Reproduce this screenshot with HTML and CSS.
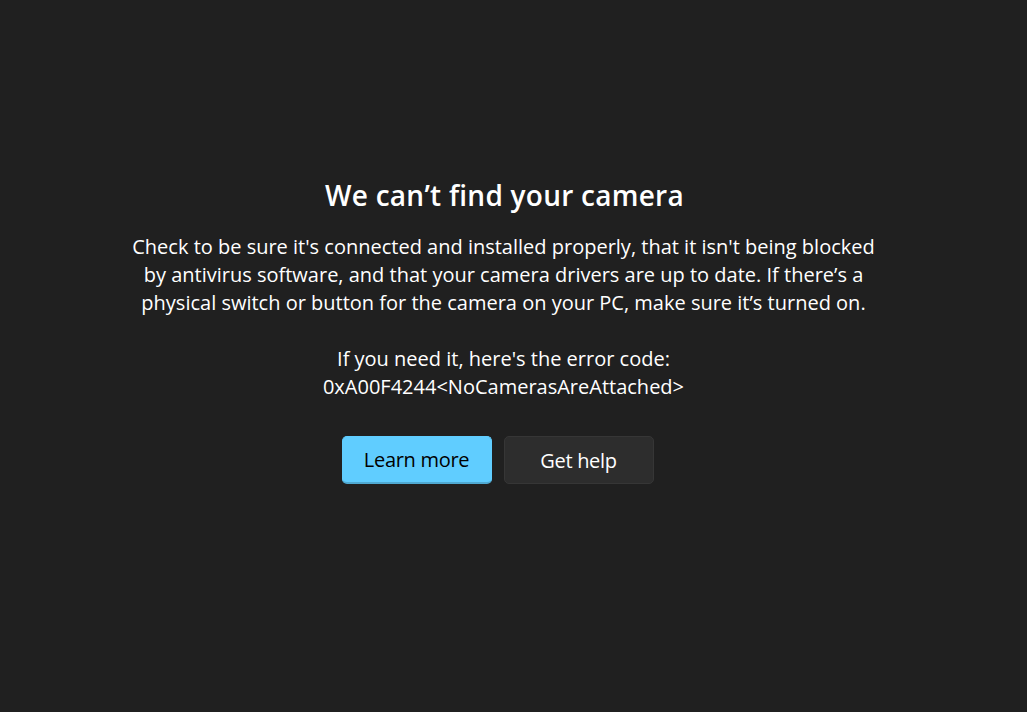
FILE: index.html
```html
<!DOCTYPE html>
<html lang="en">
<head>
    <meta charset="UTF-8">
    <meta name="viewport" content="width=device-width, initial-scale=1.0">
    <title>Camera</title>
    <link rel="stylesheet" href="styles.css">
</head>
<body>

    <main class="notice">
        <h1 class="notice-title">We can’t find your camera</h1>
        <p class="notice-text">
            Check to be sure it's connected and installed properly, that it isn't being blocked<br>
            by antivirus software, and that your camera drivers are up to date. If there’s a<br>
            physical switch or button for the camera on your PC, make sure it’s turned on.
        </p>
        <p class="notice-text">
            If you need it, here's the error code:<br>
            0xA00F4244&lt;NoCamerasAreAttached&gt;
        </p>
        <div class="actions">
            <button class="btn btn-accent">Learn more</button>
            <button class="btn btn-plain">Get help</button>
        </div>
    </main>

</body>
</html>
```

FILE: styles.css
```css
body {
    font-family: "Open Sans", "Noto Sans", sans-serif;
    background-color: #202020;
    color: #fff;
    margin: 0;
    min-height: 712px;
}
.notice {
    display: flex;
    flex-direction: column;
    align-items: center;
    padding: 176px 20px 0 0;
    text-align: center;
}
.notice-title {
    font-size: 28px;
    font-weight: 600;
    line-height: 38px;
    margin: 0 0 19px 2px;
    letter-spacing: 0.25px;
}
.notice-text {
    font-size: 20px;
    line-height: 28px;
    margin: 0 0 28px;
    letter-spacing: 0;
}
.actions {
    display: flex;
    gap: 12px;
    margin-top: 7px;
    padding-right: 12px;
}
.btn {
    width: 150px;
    height: 48px;
    border-radius: 5px;
    font-family: inherit;
    font-size: 20px;
    letter-spacing: -0.3px;
    cursor: pointer;
    box-sizing: border-box;
}
.btn-accent {
    background-color: #60cdff;
    color: #000;
    border: 1px solid #60cdff;
    border-bottom: 2px solid #4fa9d2;
}
.btn-plain {
    background-color: #2d2d2d;
    color: #fff;
    border: 1px solid #363636;
}
```
